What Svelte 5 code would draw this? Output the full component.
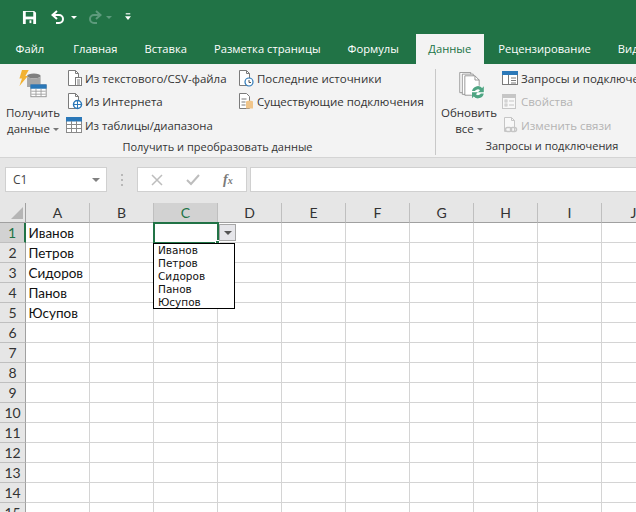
<script>
    const tabs = ['Файл', 'Главная', 'Вставка', 'Разметка страницы', 'Формулы', 'Данные', 'Рецензирование', 'Вид'];
    const cols = ['A', 'B', 'C', 'D', 'E', 'F', 'G', 'H', 'I', 'J'];
    const names = ['Иванов', 'Петров', 'Сидоров', 'Панов', 'Юсупов'];
    const rows = Array.from({ length: 15 }, (_, i) => i + 1);
</script>

<div class="excel">
    <div class="titlebar">
        <svg class="qa save" width="15" height="15" viewBox="0 0 16 16">
            <path d="M1 1h12l2 2v12H1z" fill="#fff"/>
            <rect x="4" y="2" width="8" height="5" fill="#217346"/>
            <rect x="4" y="10" width="8" height="5" fill="#217346"/>
            <rect x="8" y="11" width="2" height="3" fill="#fff"/>
        </svg>
        <svg class="qa undo" width="16" height="16" viewBox="0 0 16 16" fill="none" stroke="#fff" stroke-width="2">
            <path d="M6 2 1.500 6 6 10"/>
            <path d="M2 6h6a4 4 0 0 1 4 4 4 4 0 0 1-4 4H5"/>
        </svg>
        <i class="caret white"></i>
        <svg class="qa redo" width="16" height="16" viewBox="0 0 16 16" fill="none" stroke="#5d9a7c" stroke-width="2">
            <path d="M10 2 14.500 6 10 10"/>
            <path d="M14 6H8a4 4 0 0 0-4 4 4 4 0 0 0 4 4h3"/>
        </svg>
        <i class="caret dim"></i>
        <svg class="qa custom" width="6" height="8" viewBox="0 0 8 10">
            <rect x="1" y="0" width="6" height="1.500" fill="#fff"/>
            <path d="M0 4h8L4 9z" fill="#fff"/>
        </svg>
    </div>

    <nav class="tabs">
        {#each tabs as tab}
            <span class="tab" class:active={tab === 'Данные'}>{tab}</span>
        {/each}
    </nav>

    <div class="ribbon">
        <section class="group first">
            <div class="group-body">
                <div class="big get">
                    <svg width="36" height="33" viewBox="0 0 36 33">
                        <ellipse cx="19" cy="7" rx="8" ry="3" fill="#7f7f7f"/>
                        <path d="M11 7v13h16V7a8 3 0 0 1-16 0z" fill="#a6a6a6"/>
                        <path d="M5 0h8L9 7h3L2 19l3-9H2z" fill="#f2b233"/>
                        <rect x="15.500" y="17.500" width="18" height="14" fill="#fff" stroke="#8a8a8a"/>
                        <rect x="15.500" y="17.500" width="18" height="4" fill="#2b78b8" stroke="#2b78b8"/>
                        <path d="M16 25h17M16 28.500h17M21.500 22v9M27.500 22v9" stroke="#9a9a9a" fill="none"/>
                    </svg>
                    <span class="big-label">Получить<br />данные<i class="caret gray"></i></span>
                </div>
                <div class="small-col col-a">
                    <div class="item">
                        <svg width="16" height="17" viewBox="0 0 16 17" fill="none" stroke="#7b7b7b">
                            <path d="M1.500.5h7l3 3v12h-10z" fill="#fff"/>
                            <path d="M8.500.5v3h3"/>
                            <rect x="8.500" y="7.500" width="6" height="8" fill="#fff"/>
                            <path d="M10 10h3M10 12h3M10 14h3"/>
                        </svg>
                        <span>Из текстового/CSV-файла</span>
                    </div>
                    <div class="item">
                        <svg width="16" height="17" viewBox="0 0 16 17" fill="none" stroke="#7b7b7b">
                            <path d="M1.500.5h7l3 3v12h-10z" fill="#fff"/>
                            <path d="M8.500.5v3h3"/>
                            <circle cx="10.500" cy="11.500" r="4" fill="#fff" stroke="#2b78b8" stroke-width="1.500"/>
                            <path d="M6.500 11.500h8M10.500 7.500v8" stroke="#2b78b8"/>
                        </svg>
                        <span>Из Интернета</span>
                    </div>
                    <div class="item table-item">
                        <svg width="17" height="17" viewBox="0 0 17 17" fill="none" stroke="#8a8a8a">
                            <rect x=".5" y=".5" width="15" height="15" fill="#fff"/>
                            <rect x=".5" y=".5" width="15" height="3.500" fill="#2b78b8" stroke="#2b78b8"/>
                            <path d="M1 7.500h14M1 11.500h14M5.500 4v11M10.500 4v11"/>
                        </svg>
                        <span>Из таблицы/диапазона</span>
                    </div>
                </div>
                <div class="small-col col-b">
                    <div class="item">
                        <svg width="16" height="17" viewBox="0 0 16 17" fill="none" stroke="#7b7b7b">
                            <path d="M1.500.5h7l3 3v12h-10z" fill="#fff"/>
                            <path d="M8.500.5v3h3"/>
                            <circle cx="11" cy="12" r="4" fill="#fff" stroke="#2b78b8" stroke-width="1.200"/>
                            <path d="M11 10v2.500h2" stroke="#555"/>
                        </svg>
                        <span>Последние источники</span>
                    </div>
                    <div class="item">
                        <svg width="16" height="17" viewBox="0 0 16 17" fill="none" stroke="#7b7b7b">
                            <path d="M1.500.5h7l3 3v12h-10z" fill="#fff"/>
                            <path d="M3.500 6h5M3.500 9h4M3.500 12h4"/>
                            <ellipse cx="11.500" cy="9" rx="3.500" ry="1.500" fill="#f0c58a" stroke="none"/>
                            <path d="M8 9v6.500h7V9z" fill="#f0c58a" stroke="none"/>
                        </svg>
                        <span>Существующие подключения</span>
                    </div>
                </div>
            </div>
            <div class="group-label">Получить и преобразовать данные</div>
        </section>

        <section class="group second">
            <div class="group-body">
                <div class="big refresh">
                    <svg width="30" height="32" viewBox="0 0 30 32">
                        <g fill="#fff" stroke="#8a8a8a">
                            <path d="M.5.500h13v24H.500z"/>
                            <path d="M3.500 2.500h13v24H3.500z"/>
                            <path d="M6.500 4.500h12l5 5v18h-17z"/>
                        </g>
                        <path d="M18.500 4.500v5h5" fill="none" stroke="#8a8a8a"/>
                        <circle cx="22" cy="24" r="8" fill="#fff"/>
                        <path d="M15 22.500a7 7 0 0 1 12-3.500l2-2v7h-7l2.500-2.500a4 4 0 0 0-6 1z" fill="#4fa583"/>
                        <path d="M29 25.500a7 7 0 0 1-12 3.500l-2 2v-7h7l-2.500 2.500a4 4 0 0 0 6-1z" fill="#4fa583"/>
                    </svg>
                    <span class="big-label">Обновить<br />все<i class="caret gray"></i></span>
                </div>
                <div class="small-col col-c">
                    <div class="item">
                        <svg width="16" height="15" viewBox="0 0 16 15" fill="none" stroke="#7b7b7b">
                            <rect x=".5" y=".5" width="15" height="13" fill="#fff"/>
                            <rect x=".5" y=".5" width="15" height="3" fill="#2b78b8" stroke="#2b78b8"/>
                            <path d="M6.500 4v9.500M9 7h5M9 9.500h5M9 12h5"/>
                        </svg>
                        <span>Запросы и подключения</span>
                    </div>
                    <div class="item off">
                        <svg width="16" height="15" viewBox="0 0 16 15" fill="none" stroke="#c6c6c6">
                            <rect x=".5" y=".5" width="13" height="14" fill="#f8f8f8"/>
                            <rect x=".5" y=".5" width="13" height="3" fill="#c6c6c6"/>
                            <rect x="3" y="6" width="2" height="2"/>
                            <rect x="3" y="10" width="2" height="2"/>
                            <path d="M7 7h5M7 11h5"/>
                        </svg>
                        <span>Свойства</span>
                    </div>
                    <div class="item off">
                        <svg width="16" height="17" viewBox="0 0 16 17" fill="none" stroke="#c6c6c6">
                            <path d="M2.500.5h7l3 3v11h-10z" fill="#f8f8f8"/>
                            <path d="M9.500.5v3h3"/>
                            <rect x="3.500" y="10.500" width="6" height="4" rx="2" stroke-width="1.500"/>
                            <rect x="8.500" y="10.500" width="6" height="4" rx="2" stroke-width="1.500"/>
                        </svg>
                        <span>Изменить связи</span>
                    </div>
                </div>
            </div>
            <div class="group-label">Запросы и подключения</div>
        </section>
    </div>

    <div class="formula-bar">
        <div class="name-box">C1<i class="caret name-caret"></i></div>
        <div class="dots"><b></b><b></b><b></b></div>
        <div class="fx-box">
            <svg width="12" height="12" viewBox="0 0 12 12" fill="none" stroke="#bdbdbd" stroke-width="1.500">
                <path d="M1 1l10 10M11 1 1 11"/>
            </svg>
            <svg width="14" height="12" viewBox="0 0 14 12" fill="none" stroke="#bdbdbd" stroke-width="2">
                <path d="M1 6l4 4 8-9"/>
            </svg>
            <span class="fx">f<span class="fx-x">x</span></span>
        </div>
        <div class="formula-input"></div>
    </div>

    <div class="sheet">
        <div class="head-row">
            <div class="corner"><svg width="12" height="12" viewBox="0 0 12 12"><path d="M12 0v12H0z" fill="#b5b5b5"/></svg></div>
            {#each cols as col}
                <div class="col-head" class:sel={col === 'C'}>{col}</div>
            {/each}
        </div>
        {#each rows as row}
            <div class="row">
                <div class="row-head" class:sel={row === 1}>{row}</div>
                {#each cols as col, c}
                    <div class="cell">{c === 0 && names[row - 1] ? names[row - 1] : ''}</div>
                {/each}
            </div>
        {/each}

        <div class="selection"><i class="handle"></i></div>
        <div class="drop-btn"><i class="caret drop-caret"></i></div>
        <ul class="drop-list">
            {#each names as name}
                <li>{name}</li>
            {/each}
        </ul>
    </div>
</div>

<style>
    :global(body) {
        margin: 0;
        background: #e6e6e6;
    }

    .excel {
        width: 636px;
        height: 512px;
        overflow: hidden;
        position: relative;
        background: #e6e6e6;
        font-family: "Open Sans", "Noto Sans", sans-serif;
        font-size: 11.5px;
        color: #333;
    }

    .titlebar {
        height: 34px;
        background: #217346;
        display: flex;
        align-items: center;
        padding-left: 22px;
        box-sizing: border-box;
    }

    .qa.undo {
        margin-left: 14px;
    }

    .qa.redo {
        margin-left: 9px;
    }

    .qa.custom {
        margin-left: 13px;
    }

    .caret {
        display: inline-block;
        width: 0;
        height: 0;
        border-left: 3px solid transparent;
        border-right: 3px solid transparent;
        border-top: 3px solid #fff;
    }

    .caret.white {
        margin-left: 4px;
    }

    .caret.dim {
        margin-left: 4px;
        border-top-color: #5d9a7c;
    }

    .caret.gray {
        border-top-color: #777;
        margin-left: 3px;
        vertical-align: middle;
    }

    .tabs {
        height: 30px;
        background: #217346;
        display: flex;
        padding-left: 2px;
        white-space: nowrap;
    }

    .tab {
        color: #fff;
        padding: 0 13.500px;
        line-height: 30px;
        font-size: 11.200px;
    }

    .tab:first-child {
        padding-right: 15.500px;
    }

    .tab.active {
        background: #f3f3f3;
        color: #217346;
        padding: 0 12.500px;
        margin-left: 3.500px;
        margin-right: 1px;
    }

    .ribbon {
        height: 93px;
        background: #f3f3f3;
        border-bottom: 1px solid #d4d4d4;
        box-sizing: content-box;
        display: flex;
    }

    .group {
        display: flex;
        flex-direction: column;
        flex: none;
    }

    .group.first {
        width: 435px;
    }

    .group.second {
        border-left: 1px solid #c8c8c8;
        margin-top: 5px;
        margin-bottom: 2px;
        width: 232px;
    }

    .group-body {
        flex: 1;
        display: flex;
        min-height: 0;
    }

    .group-label {
        text-align: center;
        height: 20px;
        line-height: 20px;
        white-space: nowrap;
        font-size: 11px;
    }

    .group.second .group-label {
        height: 18px;
        line-height: 18px;
    }

    .big {
        display: flex;
        flex-direction: column;
        align-items: center;
        text-align: center;
        flex: none;
    }

    .big-label {
        line-height: 16px;
        margin-top: 7px;
    }

    .big.get {
        width: 66px;
        padding-top: 6px;
    }

    .big.refresh {
        width: 66px;
        padding-top: 3px;
    }

    .big.refresh svg {
        margin-left: 6px;
        margin-bottom: -1px;
    }

    .small-col {
        display: flex;
        flex-direction: column;
        padding-top: 3px;
    }

    .col-a {
        width: 171px;
        padding-left: 1px;
    }

    .col-a .item {
        gap: 2px;
    }

    .col-c {
        white-space: nowrap;
        margin-top: -5px;
    }

    .item {
        height: 23.300px;
        display: flex;
        align-items: center;
        gap: 3px;
        white-space: nowrap;
    }

    .col-a .table-item {
        margin-left: -1px;
        font-size: 11.300px;
    }

    .item.off {
        color: #b4b4b4;
    }

    .item svg {
        flex: none;
    }

    .formula-bar {
        display: flex;
        align-items: stretch;
        height: 25px;
        margin-top: 9px;
        padding-left: 5px;
    }

    .name-box,
    .fx-box,
    .formula-input {
        background: #fff;
        border: 1px solid #d0d0d0;
        box-sizing: border-box;
    }

    .name-box {
        width: 102px;
        display: flex;
        align-items: center;
        justify-content: space-between;
        padding: 0 6px 0 7px;
        font-size: 12px;
        color: #444;
    }

    .name-caret {
        border-left-width: 4px;
        border-right-width: 4px;
        border-top: 4px solid #808080;
    }

    .dots {
        width: 30px;
        display: flex;
        flex-direction: column;
        align-items: center;
        justify-content: center;
        gap: 3px;
    }

    .dots b {
        width: 2px;
        height: 2px;
        background: #b8b8b8;
    }

    .fx-box {
        width: 110px;
        display: flex;
        align-items: center;
        padding-left: 13px;
        gap: 23px;
    }

    .fx {
        font-family: "Liberation Serif", serif;
        font-style: italic;
        font-weight: 700;
        font-size: 14px;
        color: #7a7a7a;
    }

    .fx-x {
        font-size: 10px;
    }

    .formula-input {
        flex: 1;
        margin-left: 3px;
        border-right: none;
    }

    .sheet {
        position: relative;
        margin-top: 11px;
        background: #fff;
        font-family: Lato, "Open Sans", sans-serif;
    }

    .head-row,
    .row {
        display: flex;
        height: 20px;
    }

    .corner,
    .row-head {
        width: 26px;
        flex: none;
        box-sizing: border-box;
        background: #e6e6e6;
        border-right: 1px solid #a0a0a0;
    }

    .corner {
        display: flex;
        align-items: flex-end;
        justify-content: flex-end;
        padding: 0 2px 3px 0;
        border-bottom: 1px solid #a0a0a0;
    }

    .row-head {
        border-bottom: 1px solid #bfbfbf;
        text-align: center;
        line-height: 20px;
        font-size: 14px;
        color: #333;
    }

    .row-head.sel {
        background: #d2d2d2;
        color: #217346;
        border-right: 2px solid #217346;
    }

    .col-head {
        width: 64px;
        flex: none;
        box-sizing: border-box;
        background: #e6e6e6;
        border-right: 1px solid #bfbfbf;
        border-bottom: 1px solid #a0a0a0;
        text-align: center;
        line-height: 20px;
        font-size: 14px;
        color: #333;
    }

    .col-head.sel {
        background: #d2d2d2;
        color: #217346;
        border-bottom-color: #217346;
    }

    .cell {
        width: 64px;
        flex: none;
        box-sizing: border-box;
        border-right: 1px solid #d4d4d4;
        border-bottom: 1px solid #d4d4d4;
        padding-left: 2.500px;
        line-height: 20px;
        font-size: 13.500px;
        color: #111;
        white-space: nowrap;
    }

    .selection {
        position: absolute;
        left: 153px;
        top: 19px;
        width: 66px;
        height: 22px;
        box-sizing: border-box;
        border: 2px solid #217346;
    }

    .handle {
        position: absolute;
        right: -3px;
        bottom: -3px;
        width: 5px;
        height: 5px;
        background: #217346;
        border: 1px solid #fff;
        box-sizing: border-box;
    }

    .drop-btn {
        position: absolute;
        left: 219px;
        top: 21px;
        width: 17px;
        height: 17px;
        box-sizing: border-box;
        background: #e6e6ea;
        border: 1px solid #a6a6a6;
        display: flex;
        align-items: center;
        justify-content: center;
    }

    .drop-caret {
        border-left-width: 4px;
        border-right-width: 4px;
        border-top: 4px solid #555;
    }

    .drop-list {
        position: absolute;
        left: 153px;
        top: 40px;
        width: 82px;
        height: 66px;
        box-sizing: border-box;
        margin: 0;
        padding: 0 0 0 4px;
        list-style: none;
        background: #fff;
        border: 1px solid #000;
        font-family: "DejaVu Sans", sans-serif;
        font-size: 10.500px;
        line-height: 13px;
        color: #111;
    }
</style>
